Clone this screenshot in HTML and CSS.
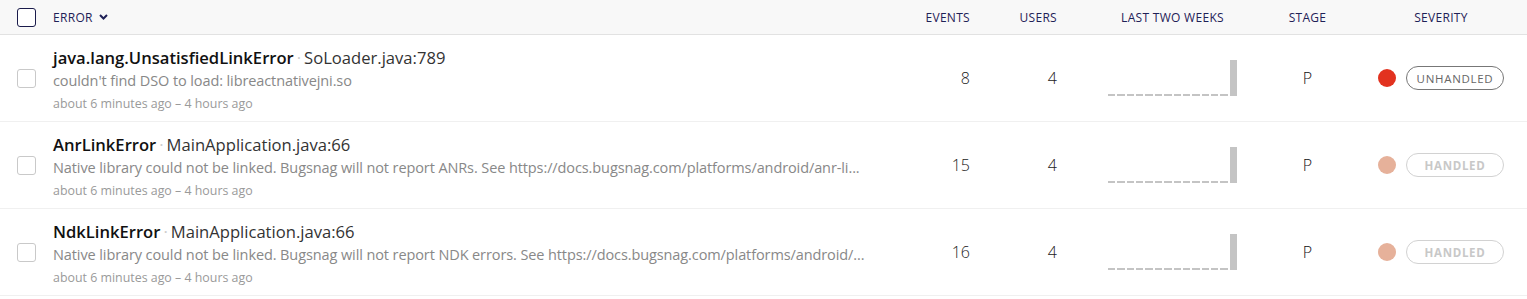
FILE: index.html
```html
<!DOCTYPE html>
<html lang="en">
<head>
    <meta charset="UTF-8">
    <title>Errors</title>
    <link rel="stylesheet" href="styles.css">
</head>
<body>
<div class="errors">
    <div class="row head">
        <div class="cell check"><span class="box dark"></span></div>
        <div class="cell name">
            Error
            <svg class="chev" width="9" height="6" viewBox="0 0 9 6"><path d="M1 1l3.5 3.5L8 1" fill="none" stroke="#1f2157" stroke-width="2"/></svg>
        </div>
        <div class="cell num">Events</div>
        <div class="cell num users">Users</div>
        <div class="cell mid">Last two weeks</div>
        <div class="cell mid">Stage</div>
        <div class="cell sev">Severity</div>
    </div>

    <div class="row">
        <div class="cell check"><span class="box"></span></div>
        <div class="cell name">
            <div class="title"><b>java.lang.UnsatisfiedLinkError</b><span class="sep">·</span>SoLoader.java:789</div>
            <div class="msg">couldn't find DSO to load: libreactnativejni.so</div>
            <div class="time">about 6 minutes ago – 4 hours ago</div>
        </div>
        <div class="cell num">8</div>
        <div class="cell num users">4</div>
        <div class="cell mid">
            <div class="spark">
                <i></i><i></i><i></i><i></i><i></i><i></i><i></i><i></i><i></i><i></i><i></i><i></i><i></i><i class="tall"></i>
            </div>
        </div>
        <div class="cell mid">P</div>
        <div class="cell sev">
            <span class="dot"></span><span class="badge">Unhandled</span>
        </div>
    </div>

    <div class="row">
        <div class="cell check"><span class="box"></span></div>
        <div class="cell name">
            <div class="title"><b>AnrLinkError</b><span class="sep">·</span>MainApplication.java:66</div>
            <div class="msg">Native library could not be linked. Bugsnag will not report ANRs. See https://docs.bugsnag.com/platforms/android/anr-li...</div>
            <div class="time">about 6 minutes ago – 4 hours ago</div>
        </div>
        <div class="cell num">15</div>
        <div class="cell num users">4</div>
        <div class="cell mid">
            <div class="spark">
                <i></i><i></i><i></i><i></i><i></i><i></i><i></i><i></i><i></i><i></i><i></i><i></i><i></i><i class="tall"></i>
            </div>
        </div>
        <div class="cell mid">P</div>
        <div class="cell sev">
            <span class="dot light"></span><span class="badge handled">Handled</span>
        </div>
    </div>

    <div class="row">
        <div class="cell check"><span class="box"></span></div>
        <div class="cell name">
            <div class="title"><b>NdkLinkError</b><span class="sep">·</span>MainApplication.java:66</div>
            <div class="msg">Native library could not be linked. Bugsnag will not report NDK errors. See https://docs.bugsnag.com/platforms/android/...</div>
            <div class="time">about 6 minutes ago – 4 hours ago</div>
        </div>
        <div class="cell num">16</div>
        <div class="cell num users">4</div>
        <div class="cell mid">
            <div class="spark">
                <i></i><i></i><i></i><i></i><i></i><i></i><i></i><i></i><i></i><i></i><i></i><i></i><i></i><i class="tall"></i>
            </div>
        </div>
        <div class="cell mid">P</div>
        <div class="cell sev">
            <span class="dot light"></span><span class="badge handled">Handled</span>
        </div>
    </div>
</div>
</body>
</html>
```

FILE: styles.css
```css
* {
    margin: 0;
    padding: 0;
    box-sizing: border-box;
}

body {
    font-family: "Open Sans", "Noto Sans", sans-serif;
    color: #222;
    background: #fff;
}

.row {
    display: grid;
    grid-template-columns: 53px 1fr 70px 110px 185px 85px 177px;
    align-items: center;
    height: 87px;
    border-bottom: 1px solid #f0f0f0;
}

.row.head {
    height: 35px;
    background: #f8f8f8;
    border-bottom: 1px solid #e2e2e2;
    font-size: 12px;
    letter-spacing: 0.3px;
    text-transform: uppercase;
    color: #1f2157;
}

.check {
    display: flex;
    justify-content: flex-end;
    padding-right: 17px;
}

.box {
    width: 19px;
    height: 19px;
    border: 1px solid #c9c9c9;
    border-radius: 3px;
    background: #fff;
}

.box.dark {
    border: 1.5px solid #1a1b4b;
}

.head .name {
    display: flex;
    align-items: center;
    gap: 6px;
    padding-top: 0;
}

.name {
    min-width: 0;
    padding: 6px 0 0 0;
}

.title {
    font-size: 16.6px;
    line-height: 22px;
    color: #333;
    white-space: nowrap;
}

.title b {
    font-weight: 600;
    color: #111;
}

.sep {
    color: #ccc;
    margin: 0 3px;
}

.msg {
    font-size: 14.5px;
    letter-spacing: -0.1px;
    line-height: 23px;
    color: #888;
    white-space: nowrap;
    overflow: hidden;
    text-overflow: ellipsis;
}

.time {
    font-size: 12.4px;
    line-height: 23px;
    color: #9a9a9a;
}

.num {
    text-align: right;
    font-size: 16px;
    font-weight: 300;
    color: #222;
}

.head .num,
.head .mid,
.head .sev {
    font-size: 12px;
    font-weight: 400;
    color: #1f2157;
}

.users {
    padding-right: 23px;
}

.mid {
    text-align: center;
    font-size: 16px;
    font-weight: 300;
    color: #111;
}

.spark {
    width: 129px;
    height: 36px;
    margin: 0 auto;
    display: flex;
    align-items: flex-end;
    gap: 2px;
}

.spark i {
    flex: 1;
    height: 2px;
    background: #c4c4c4;
}

.spark i.tall {
    height: 36px;
}

.sev {
    display: flex;
    justify-content: center;
    align-items: center;
    gap: 10px;
    padding: 0 23px 0 28px;
}

.dot {
    width: 18px;
    height: 18px;
    border-radius: 50%;
    background: #e2321f;
}

.dot.light {
    background: #e6b19a;
}

.badge {
    width: 98px;
    height: 24px;
    border: 1px solid #777;
    border-radius: 12px;
    font-size: 11.5px;
    letter-spacing: 0.7px;
    text-transform: uppercase;
    color: #666;
    display: flex;
    align-items: center;
    justify-content: center;
}

.badge.handled {
    border-color: #d2d2d2;
    color: #c8c8c8;
    font-weight: 700;
}
```
